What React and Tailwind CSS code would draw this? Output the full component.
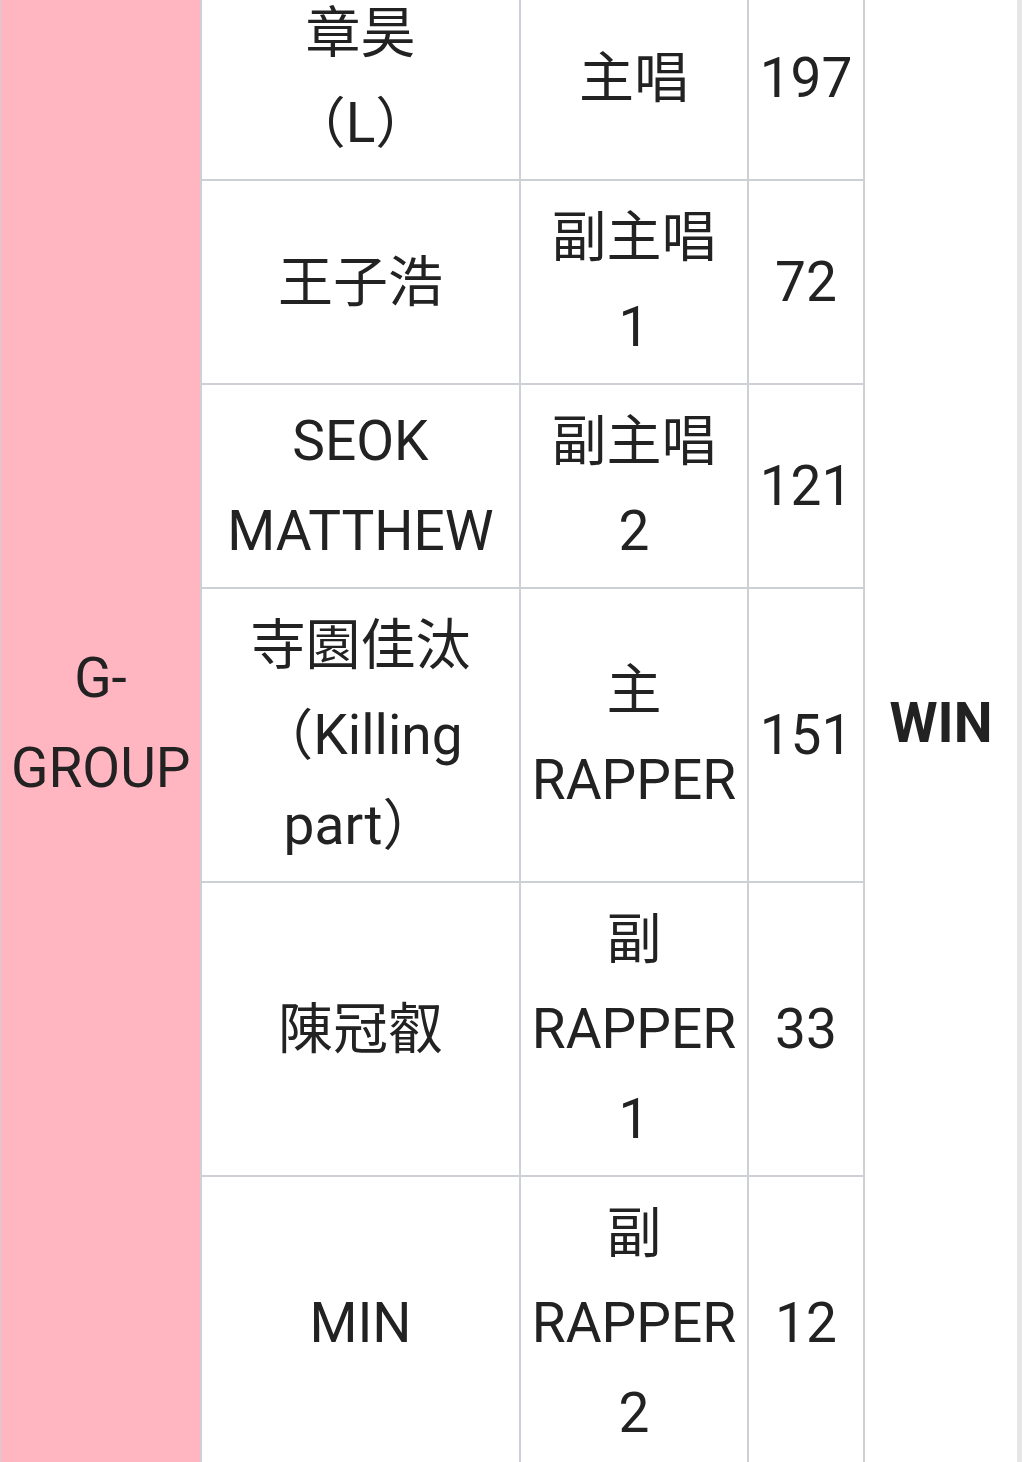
import React from "react";

const rows = [
  { name: ["章昊", "（L）"], role: ["主唱"], n: "197" },
  { name: ["王子浩"], role: ["副主唱", "1"], n: "72" },
  { name: ["SEOK", "MATTHEW"], role: ["副主唱", "2"], n: "121" },
  { name: ["寺園佳汰", "（Killing", "part）"], role: ["主", "RAPPER"], n: "151" },
  { name: ["陳冠叡"], role: ["副", "RAPPER", "1"], n: "33" },
  { name: ["MIN"], role: ["副", "RAPPER", "2"], n: "12" },
];

const Lines = ({ items }) => (
  <>
    {items.map((t, i) => (
      <React.Fragment key={i}>
        {i > 0 && <br />}
        {t}
      </React.Fragment>
    ))}
  </>
);

export default function App() {
  const cell =
    "border-2 border-[#cdd0d4] px-[10px] py-[11px] text-center align-middle";
  return (
    <div className="w-[1022px] h-[1462px] overflow-hidden bg-white text-[#222222] flex">
      <div className="w-[1017px] shrink-0">
        <table
          className="table-fixed border-collapse w-[1017px] -mt-[25px] -ml-[1px] text-[55px] leading-[90px]"
          style={{ fontFamily: "Roboto, 'Noto Sans CJK TC', sans-serif" }}
        >
          <colgroup>
            <col className="w-[201px]" />
            <col className="w-[319px]" />
            <col className="w-[228px]" />
            <col className="w-[116px]" />
            <col className="w-[153px]" />
          </colgroup>
          <tbody>
            {rows.map((r, i) => (
              <tr key={i}>
                {i === 0 && (
                  <td rowSpan={rows.length} className={`${cell} bg-[#ffb6c1]`}>
                    G-
                    <br />
                    GROUP
                  </td>
                )}
                <td className={cell}>
                  <Lines items={r.name} />
                </td>
                <td className={cell}>
                  <Lines items={r.role} />
                </td>
                <td className={cell}>{r.n}</td>
                {i === 0 && (
                  <td
                    rowSpan={rows.length}
                    className={`${cell} font-bold border-r-0`}
                  >
                    WIN
                  </td>
                )}
              </tr>
            ))}
          </tbody>
        </table>
      </div>
      <div className="w-[5px] h-full bg-[#e6e6e6]" />
    </div>
  );
}
